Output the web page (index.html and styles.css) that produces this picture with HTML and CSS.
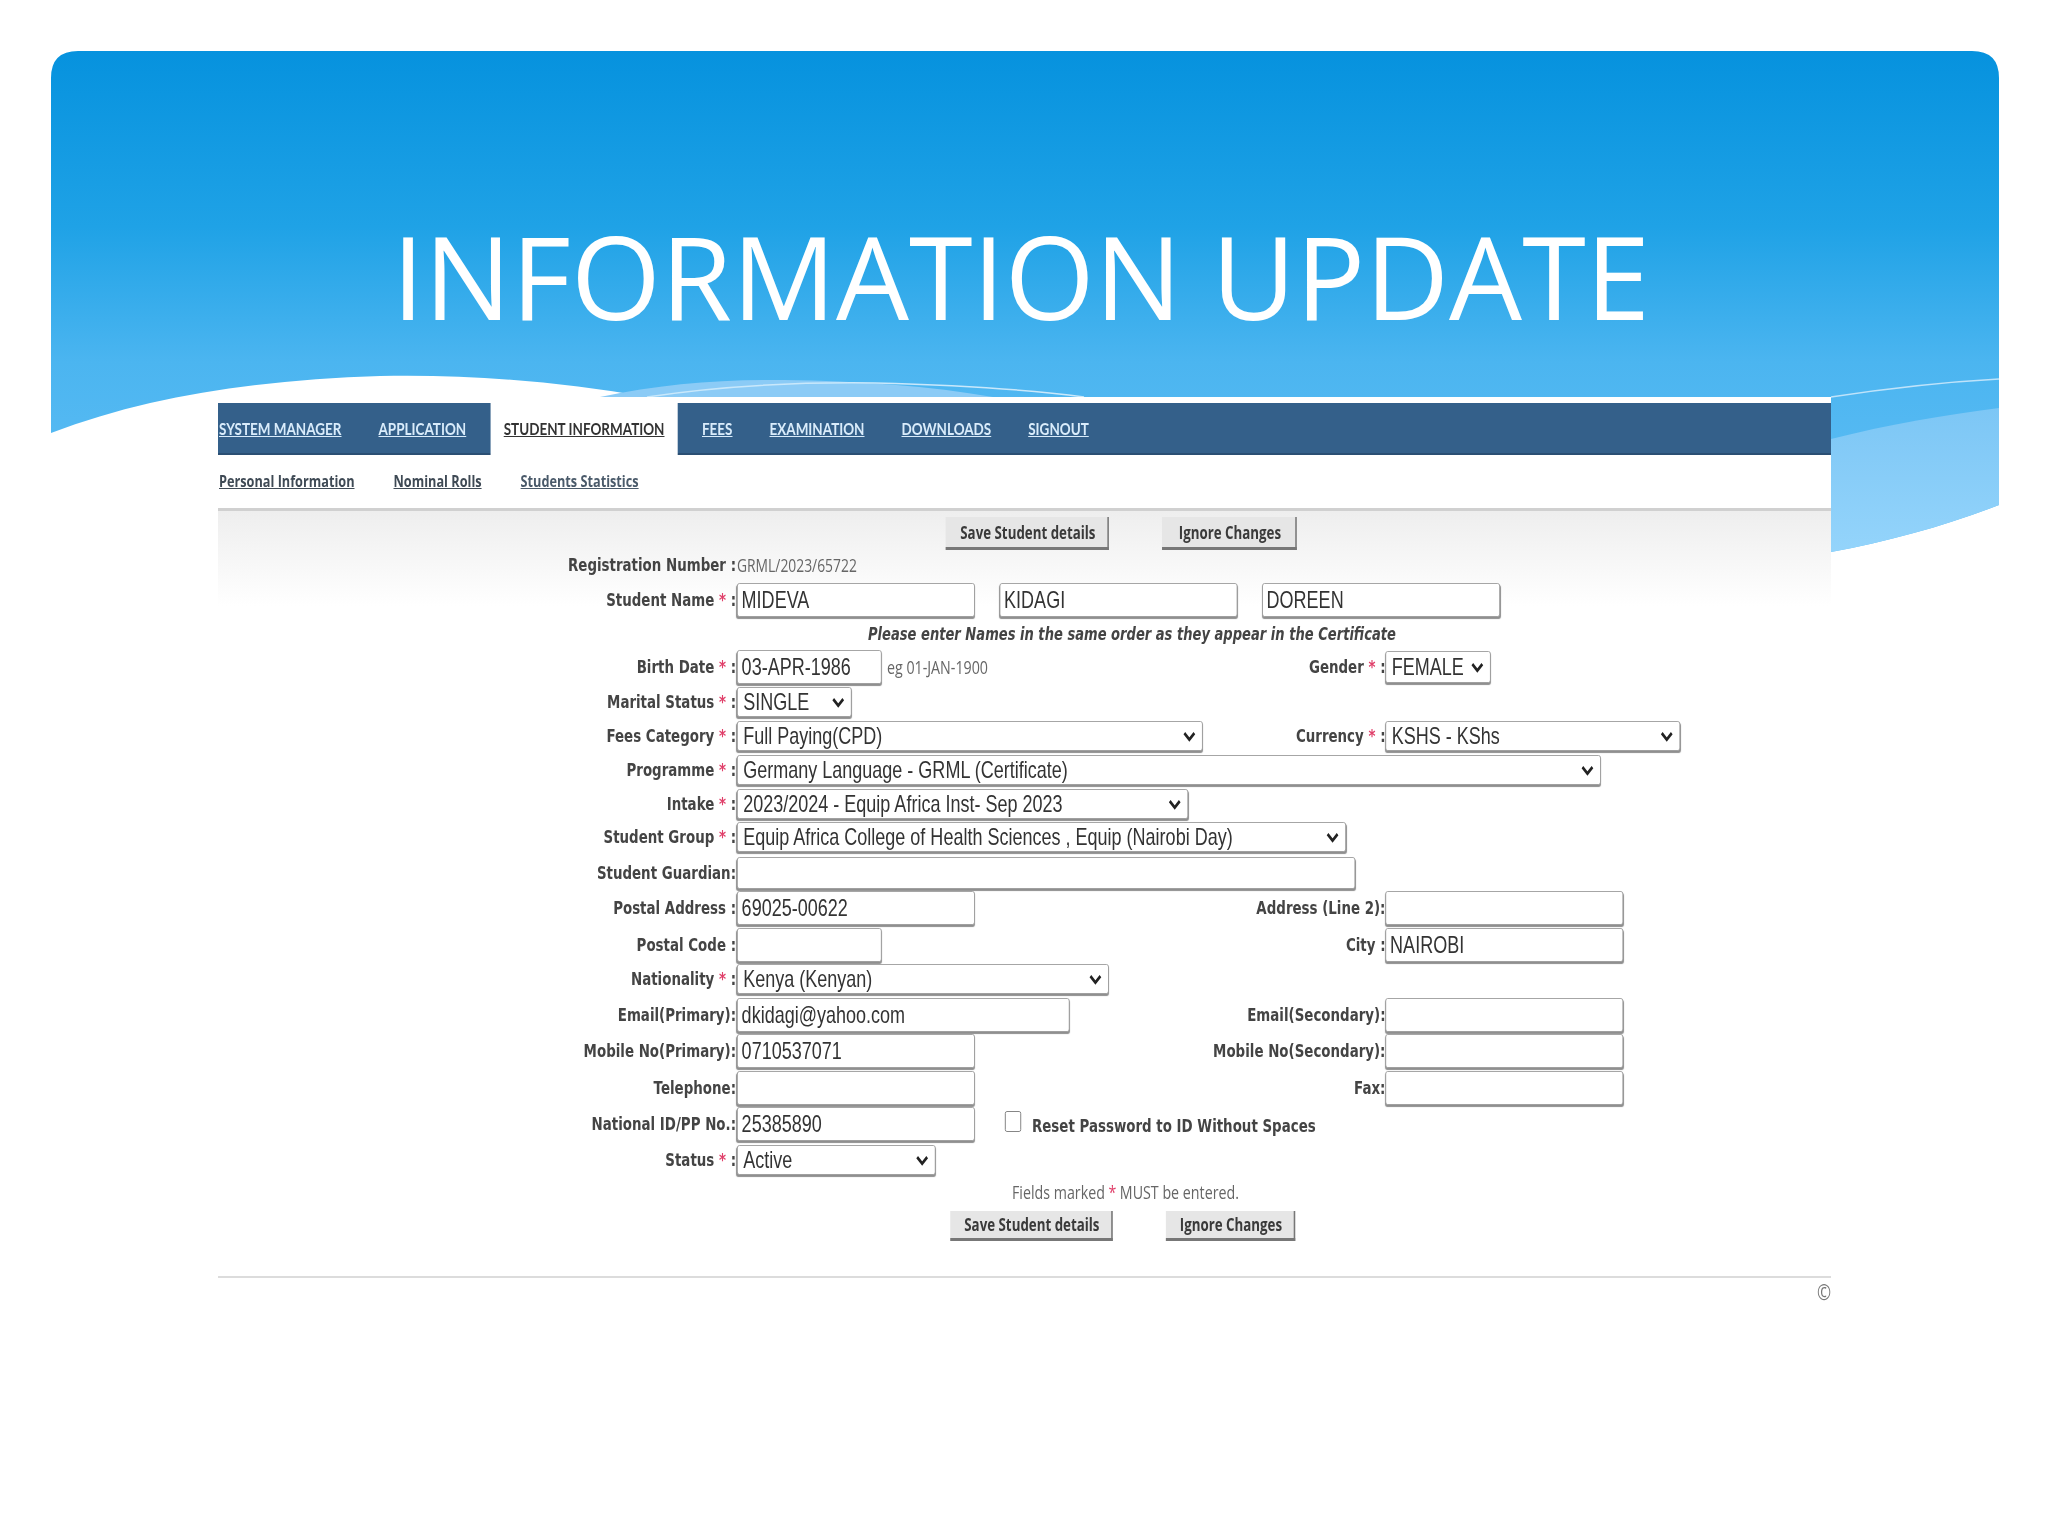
FILE: index.html
```html
<!DOCTYPE html>
<html lang="en">
<head>
<meta charset="utf-8">
<title>Information Update</title>
<link rel="stylesheet" href="styles.css">
</head>
<body>
<main class="slide">
  <svg class="backdrop" viewBox="0 0 2048 1536" aria-hidden="true">
    <defs>
      <linearGradient id="sky" gradientUnits="userSpaceOnUse" x1="0" y1="51" x2="0" y2="552">
        <stop offset="0" stop-color="#0692de"/>
        <stop offset="0.35" stop-color="#1fa2e6"/>
        <stop offset="0.62" stop-color="#4bb5f0"/>
        <stop offset="1" stop-color="#62bff6"/>
      </linearGradient>
      <linearGradient id="pale" gradientUnits="userSpaceOnUse" x1="0" y1="405" x2="0" y2="552">
        <stop offset="0" stop-color="#7cc6f5"/>
        <stop offset="1" stop-color="#94d4fb"/>
      </linearGradient>
    </defs>
    <path fill="url(#sky)" d="M51 78Q51 51 78 51H1972Q1999 51 1999 78V505C1945 526 1890 541 1831 552L1200 500L647 397C560 382 470 374 380 376C260 380 150 395 51 433Z"/>
    <path fill="#8bcbf6" d="M600 397C660 384 720 379 784 380C860 381 930 386 993 397Z"/>
    <path fill="none" stroke="#c9e8fb" stroke-width="1.5" d="M647 397C720 386 800 382 875 383C950 385 1025 389 1084 397"/>
    <path fill="url(#pale)" d="M1831 439C1890 424 1945 415 1999 408V505C1945 526 1890 541 1831 552Z"/>
    <path fill="none" stroke="#bfe3fa" stroke-width="1.5" d="M1831 397C1890 388 1945 382 1999 379"/>
  </svg>

  <h1 class="title">INFORMATION UPDATE</h1>

  <section class="shot">
    <div class="shot-inner">
      <nav class="nav">
        <a class="nav-link first" href="#">SYSTEM MANAGER</a>
        <a class="nav-link" href="#">APPLICATION</a>
        <a class="nav-link active" href="#">STUDENT INFORMATION</a>
        <a class="nav-link" href="#">FEES</a>
        <a class="nav-link" href="#">EXAMINATION</a>
        <a class="nav-link" href="#">DOWNLOADS</a>
        <a class="nav-link" href="#">SIGNOUT</a>
      </nav>
      <div class="subnav">
        <a href="#">Personal Information</a>
        <a href="#">Nominal Rolls</a>
        <a href="#">Students Statistics</a>
      </div>
      <div class="content">
        <div class="actions top-actions">
          <button class="btn save" type="button">Save Student details</button>
          <button class="btn ignore" type="button">Ignore Changes</button>
        </div>
        <div class="reg">
          <span class="lab">Registration Number :</span>
          <span class="reg-value">GRML/2023/65722</span>
        </div>
        <form class="form">
          <div class="row">
            <label class="lab">Student Name <i class="req">*</i> :</label>
            <input class="w238" value="MIDEVA">
            <input class="w238 next" value="KIDAGI">
            <input class="w238 next" value="DOREEN">
          </div>
          <p class="hint">Please enter Names in the same order as they appear in the Certificate</p>
          <div class="row">
            <label class="lab">Birth Date <i class="req">*</i> :</label>
            <div class="mid">
              <input class="w145" value="03-APR-1986">
              <span class="eg">eg 01-JAN-1900</span>
              <label class="lab2">Gender <i class="req">*</i> :</label>
            </div>
            <select class="w105 tall"><option>FEMALE</option></select>
          </div>
          <div class="row">
            <label class="lab">Marital Status <i class="req">*</i> :</label>
            <select class="w115"><option>SINGLE</option></select>
          </div>
          <div class="row">
            <label class="lab">Fees Category <i class="req">*</i> :</label>
            <div class="mid">
              <select class="w466"><option>Full Paying(CPD)</option></select>
              <label class="lab2">Currency <i class="req">*</i> :</label>
            </div>
            <select class="w295"><option>KSHS - KShs</option></select>
          </div>
          <div class="row">
            <label class="lab">Programme <i class="req">*</i> :</label>
            <select class="w863"><option>Germany Language - GRML (Certificate)</option></select>
          </div>
          <div class="row">
            <label class="lab">Intake <i class="req">*</i> :</label>
            <select class="w450"><option>2023/2024 - Equip Africa Inst- Sep 2023</option></select>
          </div>
          <div class="row">
            <label class="lab">Student Group <i class="req">*</i> :</label>
            <select class="w609"><option>Equip Africa College of Health Sciences , Equip (Nairobi Day)</option></select>
          </div>
          <div class="row">
            <label class="lab">Student Guardian:</label>
            <input class="w617 short">
          </div>
          <div class="row">
            <label class="lab">Postal Address :</label>
            <div class="mid">
              <input class="w238" value="69025-00622">
              <label class="lab2">Address (Line 2):</label>
            </div>
            <input class="w238">
          </div>
          <div class="row">
            <label class="lab">Postal Code :</label>
            <div class="mid">
              <input class="w145">
              <label class="lab2">City :</label>
            </div>
            <input class="w238" value="NAIROBI">
          </div>
          <div class="row">
            <label class="lab">Nationality <i class="req">*</i> :</label>
            <select class="w372"><option>Kenya (Kenyan)</option></select>
          </div>
          <div class="row">
            <label class="lab">Email(Primary):</label>
            <div class="mid">
              <input class="w333" value="dkidagi@yahoo.com">
              <label class="lab2">Email(Secondary):</label>
            </div>
            <input class="w238">
          </div>
          <div class="row">
            <label class="lab">Mobile No(Primary):</label>
            <div class="mid">
              <input class="w238" value="0710537071">
              <label class="lab2">Mobile No(Secondary):</label>
            </div>
            <input class="w238">
          </div>
          <div class="row">
            <label class="lab">Telephone:</label>
            <div class="mid">
              <input class="w238">
              <label class="lab2">Fax:</label>
            </div>
            <input class="w238">
          </div>
          <div class="row">
            <label class="lab">National ID/PP No.:</label>
            <input class="w238" value="25385890">
            <input class="check" type="checkbox">
            <label class="lab2 check-label">Reset Password to ID Without Spaces</label>
          </div>
          <div class="row">
            <label class="lab">Status <i class="req">*</i> :</label>
            <select class="w199"><option>Active</option></select>
          </div>
        </form>
        <p class="note">Fields marked <i class="req">*</i> MUST be entered.</p>
        <div class="actions bottom-actions">
          <button class="btn save" type="button">Save Student details</button>
          <button class="btn ignore" type="button">Ignore Changes</button>
        </div>
        <div class="rule"></div>
        <div class="copy">©</div>
      </div>
    </div>
  </section>
</main>
</body>
</html>
```
FILE: styles.css
```css
:root { --k: .77; }
* { box-sizing: border-box; }
html, body { margin: 0; background: #fff; }
.slide {
  position: relative;
  width: 2048px;
  height: 1536px;
  overflow: hidden;
  font-family: "Open Sans", sans-serif;
}
.backdrop { position: absolute; inset: 0; width: 2048px; height: 1536px; }
.title {
  position: relative;
  height: 397px;
  margin: 0;
  padding-top: 214px;
  font: 400 115.5px/124px "Open Sans", sans-serif;
  color: #fff;
  text-align: center;
  transform: translateX(-3px);
  white-space: nowrap;
}
.shot {
  position: relative;
  width: 1613px;
  height: 920px;
  margin-left: 218px;
  padding-top: 6px;
  background: #fff;
  overflow: hidden;
  filter: blur(.7px);
}
.shot-inner {
  width: calc(1613px / var(--k));
  transform: scaleX(var(--k));
  transform-origin: left top;
  color: #444;
}
.nav {
  display: flex;
  height: 52px;
  background: #34608a;
  box-shadow: inset 0 -2px 0 #2a4f73;
}
.nav-link {
  display: flex;
  align-items: center;
  padding: 0 calc(18.5px / var(--k)) 2px;
  font: 700 17.5px "Lato", sans-serif;
  color: #d9ecfb;
}
.nav-link.first { padding-left: calc(1px / var(--k)); }
.nav-link.active {
  margin: 0 calc(5.5px / var(--k));
  padding: 0 calc(13.5px / var(--k)) 2px;
  background: #fff;
  color: #333;
}
.subnav {
  display: flex;
  align-items: center;
  gap: calc(39px / var(--k));
  height: 53px;
  padding-left: calc(1px / var(--k));
  padding-bottom: 3px;
  font: 700 16.5px "Open Sans", sans-serif;
}
.subnav a { color: #3f4a55; }
.subnav a + a + a { color: #4a5a6a; }
.content {
  border-top: 3px solid #d0d0d0;
  background: linear-gradient(#eeeeee, #ffffff 95px);
}
.actions { display: flex; }
.top-actions {
  height: 39px;
  padding: 6px 0 0 calc(728px / var(--k));
  gap: calc(53px / var(--k));
}
.bottom-actions {
  height: 29px;
  padding-left: calc(732px / var(--k));
  gap: calc(53px / var(--k));
}
.btn {
  height: 33px;
  padding: 1px 0 0 3px;
  border: 0;
  border-right: 2px solid #777;
  border-bottom: 3px solid #777;
  background: #e6e6e6;
  font: 700 17.3px "Open Sans", sans-serif;
  color: #3a3a3a;
}
.bottom-actions .btn { height: 30px; padding-top: 0; }
.save { width: calc(163px / var(--k)); }
.ignore { width: calc(135px / var(--k)); }
.bottom-actions .ignore { width: calc(129px / var(--k)); }
.reg {
  display: flex;
  align-items: center;
  height: 33px;
  padding-bottom: 4px;
}
.reg-value { font-size: 18px; color: #666; }
.lab {
  flex: none;
  width: calc(519px / var(--k));
  padding-right: calc(1px / var(--k));
  font: 700 17.4px "DejaVu Sans", sans-serif;
  text-align: right;
  white-space: nowrap;
}
.lab2 {
  font: 700 17.4px "DejaVu Sans", sans-serif;
  white-space: nowrap;
}
.req { font-style: normal; color: #e0406a; }
.form {
  display: grid;
  grid-template-rows: 34px 33px 37px 34px 34px 34px 33px 35px 34px 37px 36px 34px 36px 37px 36px 38px 30px;
}
.row { display: flex; align-items: center; align-self: start; }
.mid {
  display: flex;
  align-items: center;
  justify-content: space-between;
  flex: none;
  width: calc(648.5px / var(--k));
}
.mid .eg { margin-right: auto; margin-left: calc(5px / var(--k)); padding-bottom: 1px; font-size: 18.5px; color: #666; }
input, select {
  flex: none;
  margin: 0;
  background-color: #fff;
  border: 1px solid #9a9a9a;
  border-radius: 3px;
  box-shadow: 0 2px 1px #8f8f8f;
  font: 23.4px "Liberation Sans", sans-serif;
  color: #333;
}
input { height: 34px; padding: 0 0 0 5px; }
input.short { height: 32px; }
select {
  height: 30px;
  padding: 0 0 0 7px;
  appearance: none;
  background-image: url("data:image/svg+xml,%3Csvg xmlns='http://www.w3.org/2000/svg' width='17' height='11' viewBox='0 0 17 11'%3E%3Cpath d='M2 2.2 8.5 8.6 15 2.2' fill='none' stroke='%23222' stroke-width='3.2'/%3E%3C/svg%3E");
  background-repeat: no-repeat;
  background-position: right 8px center;
}
select.tall { height: 32px; }
.next { margin-left: calc(24.5px / var(--k)); }
.w145 { width: calc(145px / var(--k)); }
.w105 { width: calc(105px / var(--k)); }
.w115 { width: calc(115px / var(--k)); }
.w199 { width: calc(199px / var(--k)); }
.w238 { width: calc(238px / var(--k)); }
.w295 { width: calc(295px / var(--k)); }
.w333 { width: calc(333px / var(--k)); }
.w372 { width: calc(372px / var(--k)); }
.w450 { width: calc(451px / var(--k)); }
.w466 { width: calc(466px / var(--k)); }
.w609 { width: calc(609px / var(--k)); }
.w617 { width: calc(618px / var(--k)); }
.w863 { width: calc(864px / var(--k)); }
input.check {
  width: calc(18px / var(--k));
  height: 21px;
  margin: -6px 0 0 calc(29px / var(--k));
  box-shadow: none;
}
.check-label { margin: 4px 0 0 calc(10px / var(--k)); }
.hint {
  margin: 0;
  align-self: center;
  padding-left: calc(650px / var(--k));
  font: italic 700 17px "DejaVu Sans", sans-serif;
  white-space: nowrap;
}
.note {
  display: flex;
  align-items: center;
  gap: .25em;
  height: 36px;
  margin: 0;
  padding-left: calc(794px / var(--k));
  padding-bottom: 3px;
  font: 18.5px "Open Sans", sans-serif;
  color: #666;
}
.rule { height: 2px; margin-top: 36px; background: #dcdcdc; }
.copy { font-size: 22px; line-height: 26px; text-align: right; color: #777; }
```
